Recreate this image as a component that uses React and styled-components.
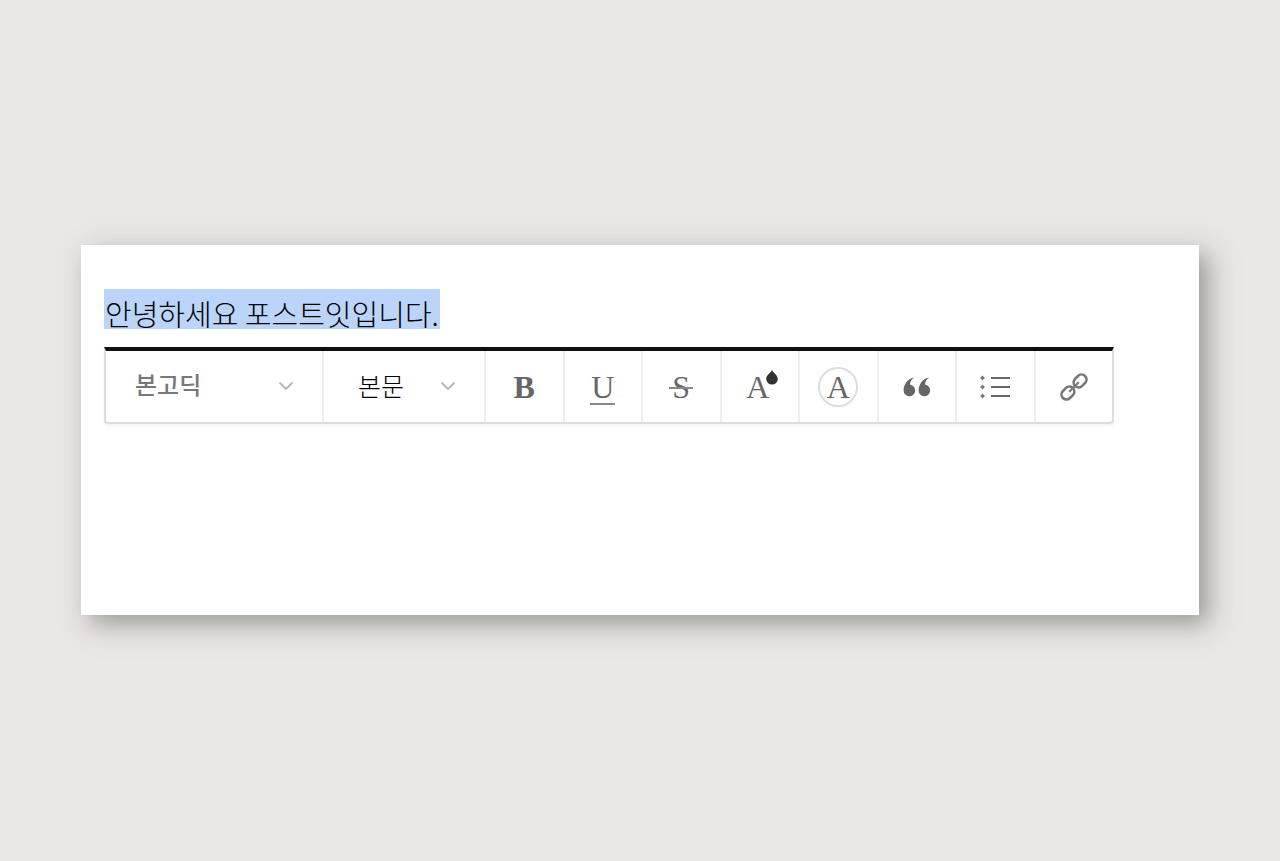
import styled, { createGlobalStyle } from "styled-components";


export default function App() {
  return (
    <Page>
      <GlobalStyle />
      <Card>
        <Content><Selection>안녕하세요 포스트잇입니다.</Selection></Content>
        <Toolbar role="toolbar" aria-label="서식">
          <SelectCell>
            <FontSelect aria-label="글꼴" defaultValue="본고딕">
              <option>본고딕</option>
            </FontSelect>
            <Chevron />
          </SelectCell>
          <SelectCell>
            <StyleSelect aria-label="문단 스타일" defaultValue="본문">
              <option>본문</option>
            </StyleSelect>
            <Chevron />
          </SelectCell>
          <ToolButton aria-label="굵게"><Letter $bold>B</Letter></ToolButton>
          <ToolButton aria-label="밑줄"><Underlined>U</Underlined></ToolButton>
          <ToolButton aria-label="취소선"><Striked>S</Striked></ToolButton>
          <ToolButton aria-label="글자색">
            <Colored>A<DropIcon /></Colored>
          </ToolButton>
          <ToolButton aria-label="배경색"><Circled>A</Circled></ToolButton>
          <ToolButton aria-label="인용"><QuoteIcon /></ToolButton>
          <ToolButton aria-label="목록"><ListIcon /></ToolButton>
          <ToolButton aria-label="링크"><LinkIcon /></ToolButton>
        </Toolbar>
      </Card>
    </Page>
  );
}

function Chevron() {
  return (
    <ChevronIcon width="16" height="10" viewBox="0 0 16 10" aria-hidden="true">
      <path d="M1.5 1.5 8 8l6.5-6.5" fill="none" stroke="#B4B4B4" strokeWidth="1.8" />
    </ChevronIcon>
  );
}

function DropIcon() {
  return (
    <Drop width="12" height="15" viewBox="0 0 12 15" aria-hidden="true">
      <path d="M6 0C7 2.6 11.8 5 11.8 9A5.8 5.6 0 0 1 .2 9C.2 5 5 2.6 6 0Z" fill="#333333" />
    </Drop>
  );
}

function QuoteIcon() {
  return (
    <svg width="28" height="20" viewBox="0 0 28 20" aria-hidden="true">
      <path id="quote" d="M11.4.6C8.6 2.2 7.2 4.6 7 7.6A5.8 5.8 0 1 1 .6 13.4C.6 7.4 4.6 1.6 11.4.6Z" fill="#666666" />
      <use href="#quote" x="15" />
    </svg>
  );
}

function ListIcon() {
  return (
    <svg width="30" height="24" viewBox="0 0 30 24" aria-hidden="true">
      <path d="M11 3h19M11 12h19M11 21h19" stroke="#666666" strokeWidth="1.8" />
      <path d="M2.5.6 4.9 3 2.5 5.4.1 3ZM2.5 9.6 4.9 12 2.5 14.4.1 12ZM2.5 18.6 4.9 21 2.5 23.4.1 21Z" fill="#777777" />
    </svg>
  );
}

function LinkIcon() {
  return (
    <svg width="28" height="28" viewBox="0 0 28 28" aria-hidden="true">
      <g transform="rotate(-45 14 14)" fill="none" stroke="#777777" strokeWidth="2.6">
        <rect x="-1.6" y="9" width="14" height="10" rx="5" />
        <rect x="15.6" y="9" width="14" height="10" rx="5" />
        <path d="M8 14h12" strokeWidth="2" strokeLinecap="round" />
      </g>
    </svg>
  );
}

const GlobalStyle = createGlobalStyle`
  body {
    margin: 0;
    background-color: #EAE6E5;
    font-family: "Noto Sans CJK KR", sans-serif;
  }
`;

const Page = styled.main`
  display: flex;
  align-items: center;
  min-height: 100vh;
  padding: 0 81px 2px;
  box-sizing: border-box;
`;

const Card = styled.section`
  flex: 1;
  min-width: 0;
  min-height: 370px;
  padding: 44px 85px 44px 23px;
  box-sizing: border-box;
  background-color: white;
  box-shadow: 9px 9px 24px rgba(75, 78, 72, 0.5);
`;

const Content = styled.p`
  display: flex;
  margin: 0 0 18px;
  font-size: 29px;
  font-weight: 300;
  line-height: 48px;
  height: 40px;
  color: #000000;
`;

const Selection = styled.mark`
  padding: 0 1px;
  color: inherit;
  background-color: #BBD5FA;
`;

const Toolbar = styled.div`
  display: grid;
  grid-template-columns: 432fr 324fr repeat(8, 157fr);
  height: 77px;
  border: 2px solid #DDDDDD;
  border-top: 4px solid #111111;
  border-radius: 0 0 4px 4px;
  box-sizing: border-box;
  box-shadow: 0 2px 3px rgba(0, 0, 0, 0.06);
`;

const SelectCell = styled.div`
  position: relative;

  & + & {
    border-left: 2px solid #EEEEEE;
  }
`;

const FontSelect = styled.select`
  width: 100%;
  height: 100%;
  padding: 0 0 6px 29px;
  border: none;
  appearance: none;
  background: none;
  font-family: inherit;
  font-size: 24px;
  font-weight: 500;
  color: #777777;
  cursor: pointer;
`;

const StyleSelect = styled(FontSelect)`
  padding: 0 0 2px 34px;
  font-size: 25px;
  font-weight: 300;
  color: #000000;
`;

const ChevronIcon = styled.svg`
  position: absolute;
  top: 30px;
  right: 28px;
  pointer-events: none;
`;

const ToolButton = styled.button.attrs({ type: "button" })`
  display: flex;
  align-items: center;
  justify-content: center;
  min-width: 0;
  padding: 2px 0 0;
  border: none;
  border-left: 2px solid #EEEEEE;
  background: none;
  cursor: pointer;
`;

const Letter = styled.span`
  position: relative;
  font-family: "Liberation Serif", serif;
  font-size: 32px;
  font-weight: ${({ $bold }) => ($bold ? 700 : 400)};
  line-height: 40px;
  color: #666666;
`;

const Underlined = styled(Letter)`
  &::after {
    content: "";
    position: absolute;
    left: -1px;
    right: -1px;
    bottom: 2px;
    height: 2px;
    background-color: #888888;
  }
`;

const Striked = styled(Letter)`
  &::after {
    content: "";
    position: absolute;
    top: 20px;
    left: -3px;
    right: -3px;
    height: 2px;
    background-color: #888888;
  }
`;

const Colored = styled(Letter)`
  margin-right: 4px;
`;

const Drop = styled.svg`
  position: absolute;
  top: 3px;
  right: -9px;
`;

const Circled = styled(Letter)`
  width: 40px;
  height: 40px;
  border: 2px solid #DDDDDD;
  border-radius: 50%;
  box-sizing: border-box;
  line-height: 36px;
  text-align: center;
`;
